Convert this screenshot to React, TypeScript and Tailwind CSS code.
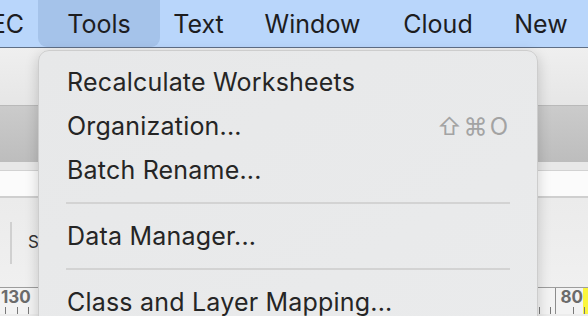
import React from 'react';

const MENUS: { label: string; width: string; active?: boolean }[] = [
  { label: 'Tools', width: 'w-[122px]', active: true },
  { label: 'Text', width: 'w-[77px]' },
  { label: 'Window', width: 'w-[151px]' },
  { label: 'Cloud', width: 'w-[100px]' },
  { label: 'New', width: 'w-[106px]' },
];

type Item = { label: string; shortcut?: string } | 'sep';

const ITEMS: Item[] = [
  { label: 'Recalculate Worksheets' },
  { label: 'Organization...', shortcut: '⇧⌘O' },
  { label: 'Batch Rename...' },
  'sep',
  { label: 'Data Manager...' },
  'sep',
  { label: 'Class and Layer Mapping...' },
];

function Ticks({ xs }: { xs: number[] }) {
  return (
    <svg className="absolute bottom-0 left-0" width="588" height="8" viewBox="0 0 588 8">
      {xs.map((x) => (
        <line key={x} x1={x + 0.5} y1={1} x2={x + 0.5} y2={8} stroke="#7a7a7a" strokeWidth={1} />
      ))}
    </svg>
  );
}

export default function App() {
  return (
    <div
      className="relative w-[588px] h-[316px] overflow-hidden bg-[#ececec]"
      style={{ fontFamily: 'Inter, "Noto Sans", sans-serif' }}
    >
      {/* ====== Menu bar ====== */}
      <div className="flex h-[48px] bg-[#b9d6fb] border-b border-[#5f6f86] text-[25px] text-[#1d1d1f]">
        <div className="w-[38px] shrink-0 flex items-center justify-end pr-[14px] pt-[2px] whitespace-nowrap">EC</div>
        {MENUS.map((m) => (
          <div
            key={m.label}
            className={`${m.width} shrink-0 flex items-center justify-center pt-[2px] whitespace-nowrap ${
              m.active ? 'bg-[#a5c3ea] rounded-b-[9px]' : ''
            }`}
          >
            {m.label}
          </div>
        ))}
      </div>

      {/* ====== Document window behind ====== */}
      <div className="h-[57px] bg-gradient-to-b from-[#efefef] to-[#e6e6e6]" />
      <div className="h-[57px] bg-gradient-to-b from-[#cbcbcb] to-[#bdbdbd] border-t border-[#b9b9b9]" />
      <div className="h-[9px] bg-[#e8e8e8] border-b border-[#d2d2d2]" />
      <div className="h-[27px] bg-[#fbfbfb] border-b-2 border-[#cfcfcf]" />
      <div className="h-[89px] bg-gradient-to-b from-[#ebebeb] to-[#f0f0f0] flex items-center">
        <div className="ml-[10px] w-[2px] h-[42px] bg-[#d0d0d0]" />
        <span className="ml-[16px] text-[17px] text-[#333]">S</span>
      </div>
      <div className="relative h-[27px] bg-[#f3f3f3] border-t border-[#9d9d9d] flex items-start">
        <span className="ml-[1px] text-[17px] font-bold text-[#6b6b6b] leading-[18px]">130</span>
        <div className="ml-auto h-full w-[1px] bg-[#8c8c8c]" />
        <span className="ml-[4px] text-[17px] font-bold text-[#6b6b6b] leading-[18px]">80</span>
        <div className="w-[5px] h-full bg-[#fbf63c]" />
        <Ticks xs={[5, 17, 28, 539, 550, 573, 584]} />
      </div>

      {/* ====== Tools dropdown ====== */}
      <div className="absolute left-[38px] top-[50px] w-[500px] h-[300px] rounded-[11px] bg-gradient-to-br from-[#e7e8e9] to-[#eaebec] border border-[#cdcdcd] shadow-[0_4px_14px_rgba(0,0,0,0.18)] pt-[10px] text-[25px] tracking-[0.2px] text-[#252525]">
        {ITEMS.map((it, i) =>
          it === 'sep' ? (
            <div key={i} className="h-[22px] pt-[9px] pl-[27px] pr-[27px]">
              <div className="h-[2px] bg-[#d3d3d3]" />
            </div>
          ) : (
            <div key={i} className="h-[44px] flex items-center pl-[28px] pr-[27px] whitespace-nowrap">
              <span>{it.label}</span>
              {it.shortcut && (
                <span className="ml-auto text-[#a3a3a3] text-[24px] tracking-[2px]">{it.shortcut}</span>
              )}
            </div>
          )
        )}
      </div>
    </div>
  );
}
